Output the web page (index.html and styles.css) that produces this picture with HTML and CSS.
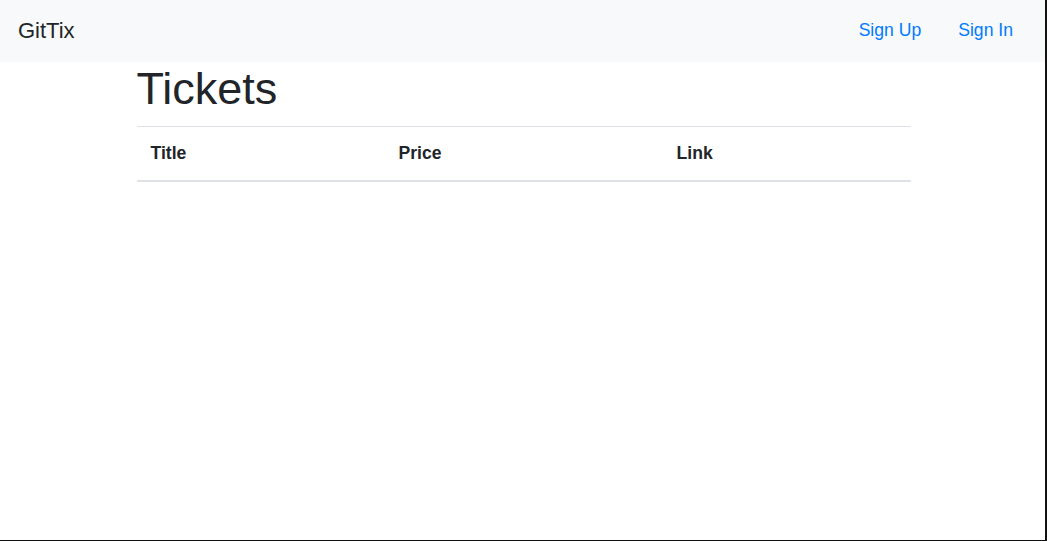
FILE: index.html
```html
<!DOCTYPE html>
<html lang="en">
<head>
    <meta charset="UTF-8">
    <meta name="viewport" content="width=device-width, initial-scale=1.0">
    <title>GitTix</title>
    <link rel="stylesheet" href="styles.css">
</head>
<body>
    <nav class="navbar">
        <a class="brand" href="/">GitTix</a>
        <ul class="nav-links">
            <li><a href="/auth/signup">Sign Up</a></li>
            <li><a href="/auth/signin">Sign In</a></li>
        </ul>
    </nav>

    <div class="container">
        <h1>Tickets</h1>
        <table class="table">
            <thead>
                <tr>
                    <th class="col-title">Title</th>
                    <th class="col-price">Price</th>
                    <th class="col-link">Link</th>
                </tr>
            </thead>
            <tbody></tbody>
        </table>
    </div>

    <div class="frame"></div>
</body>
</html>
```

FILE: styles.css
```css
html, body {
    height: 100%;
}
body {
    margin: 0;
    font-family: "Liberation Sans", Arial, sans-serif;
    font-size: 17.6px;
    line-height: 1.5;
    color: #212529;
    background: #fff;
}
a {
    text-decoration: none;
}
.navbar {
    display: flex;
    align-items: center;
    justify-content: space-between;
    height: 62px;
    padding: 0 32px 0 18px;
    margin-right: 2px;
    background: #f8f9fa;
}
.brand {
    font-size: 22px;
    line-height: 1;
    color: #212529;
}
.nav-links {
    display: flex;
    gap: 37px;
    list-style: none;
    margin: 0;
    padding: 0 0 2px;
}
.nav-links a {
    color: #007bff;
    line-height: 1;
}
.container {
    width: 774px;
    margin: 0 auto;
}
h1 {
    font-size: 45px;
    font-weight: 400;
    line-height: 1.2;
    margin: 0 0 10px;
}
.table {
    width: 100%;
    border-collapse: collapse;
    table-layout: fixed;
}
.table th {
    box-sizing: border-box;
    text-align: left;
    font-weight: 700;
    padding: 13px 13px 14px 14px;
    border-top: 1px solid #dee2e6;
    border-bottom: 2px solid #dee2e6;
    line-height: 26px;
}
.col-title {
    width: 248px;
}
.col-price {
    width: 278px;
}
.frame {
    position: fixed;
    inset: 0;
    border-right: 2px solid #111;
    border-bottom: 1px solid #111;
    pointer-events: none;
}
```
